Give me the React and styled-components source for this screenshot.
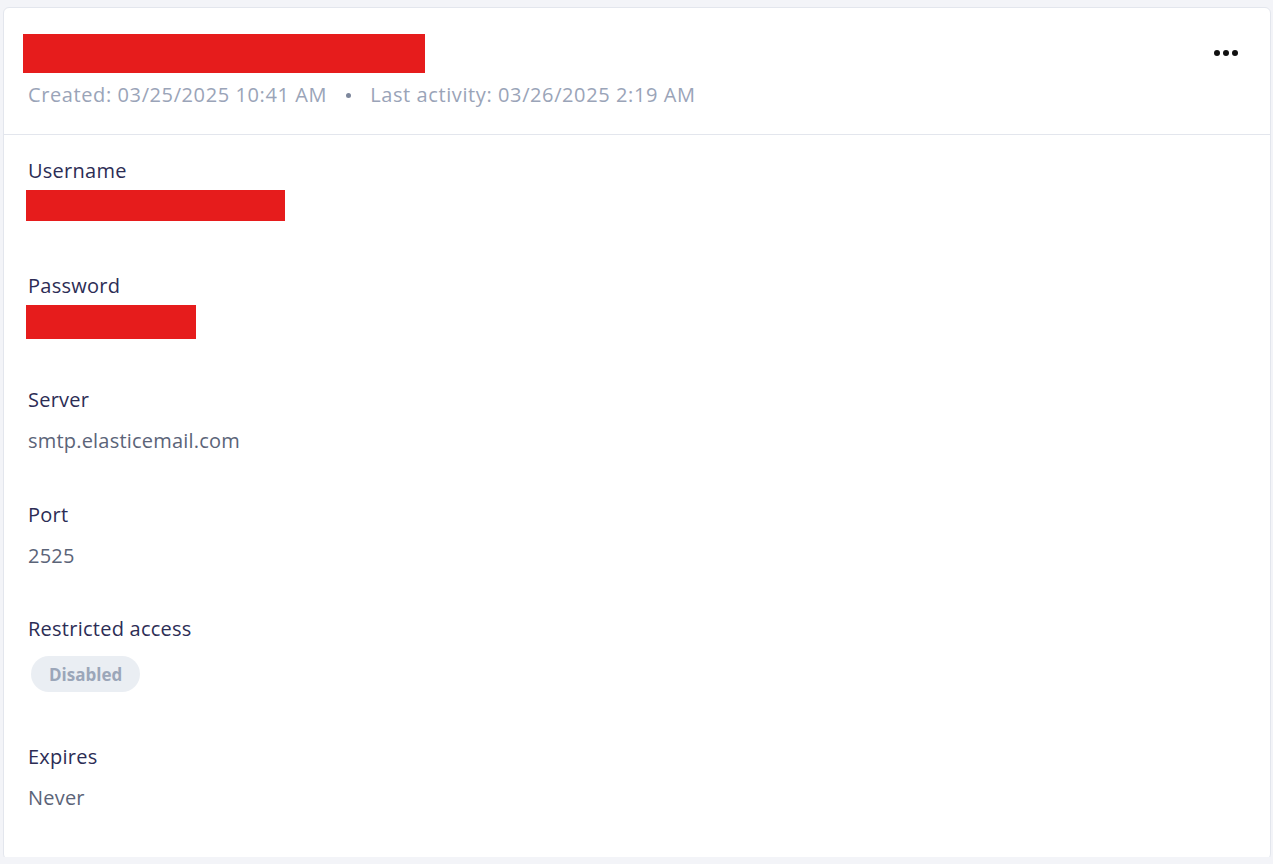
import React from 'react'
import styled, { createGlobalStyle } from 'styled-components'

const GlobalStyle = createGlobalStyle`
  html, body {
    margin: 0;
    background: #f3f4f8;
  }
  body {
    font-family: "Open Sans", sans-serif;
  }
`;

const Page = styled.div`
  padding: 7px 2px 0 3px;
  height: 857px;
  box-sizing: border-box;
  overflow: hidden;
`;

const Card = styled.div`
  background: #fff;
  border: 1px solid #e3e6ed;
  border-radius: 6px;
  height: 853px;
  box-sizing: border-box;
`;

const Header = styled.div`
  display: flex;
  justify-content: space-between;
  align-items: flex-start;
  padding: 26px 32px 0 19px;
  height: 127px;
  box-sizing: border-box;
  border-bottom: 1px solid #e3e6ed;
`;

const Redacted = styled.div`
  background: #e61c1c;
  width: ${p => p.$w}px;
  height: ${p => p.$h}px;
  margin-left: ${p => p.$x || 0}px;
`;

const Meta = styled.div`
  margin-top: 9px;
  margin-left: 5px;
  display: flex;
  align-items: center;
  gap: 19px;
  color: #9aa4b8;
  font-size: 20px;
  letter-spacing: 0.6px;
  line-height: 26px;
`;

const Dot = styled.span`
  width: 5px;
  height: 5px;
  border-radius: 50%;
  background: #7d879c;
`;

const MoreButton = styled.button`
  border: none;
  background: none;
  padding: 0;
  margin-top: 16px;
  display: flex;
  gap: 3px;
  cursor: pointer;

  span {
    width: 6px;
    height: 6px;
    border-radius: 50%;
    background: #111;
  }
`;

const Body = styled.div`
  padding: 23px 24px 0 24px;
  display: flex;
  flex-direction: column;
`;

const Field = styled.div`
  height: ${p => p.$h || 114.5}px;
`;

const Label = styled.div`
  color: #2c2d55;
  font-size: 20px;
  letter-spacing: 0.25px;
  line-height: 26px;
`;

const Value = styled.div`
  color: #5b6478;
  font-size: 20px;
  letter-spacing: 0.2px;
  line-height: 26px;
  margin-top: 15px;
`;

const Badge = styled.span`
  display: inline-block;
  margin-top: 14px;
  margin-left: 3px;
  padding: 7px 18px 6px;
  border-radius: 18px;
  background: #eaeef3;
  color: #9ba6b9;
  font-size: 17px;
  font-weight: 700;
  line-height: 23px;
`;

export default function App() {
  return (
    <Page>
      <GlobalStyle />
      <Card>
        <Header>
          <div>
            <Redacted $w={402} $h={39} />
            <Meta>
              <span>Created: 03/25/2025 10:41 AM</span>
              <Dot />
              <span>Last activity: 03/26/2025 2:19 AM</span>
            </Meta>
          </div>
          <MoreButton aria-label="More">
            <span /><span /><span />
          </MoreButton>
        </Header>
        <Body>
          <Field>
            <Label>Username</Label>
            <Redacted $w={259} $h={31} $x={-2} style={{ marginTop: 6 }} />
          </Field>
          <Field>
            <Label>Password</Label>
            <Redacted $w={170} $h={34} $x={-2} style={{ marginTop: 6 }} />
          </Field>
          <Field>
            <Label>Server</Label>
            <Value>smtp.elasticemail.com</Value>
          </Field>
          <Field>
            <Label>Port</Label>
            <Value>2525</Value>
          </Field>
          <Field $h={128}>
            <Label>Restricted access</Label>
            <Badge>Disabled</Badge>
          </Field>
          <Field>
            <Label>Expires</Label>
            <Value>Never</Value>
          </Field>
        </Body>
      </Card>
    </Page>
  );
}
